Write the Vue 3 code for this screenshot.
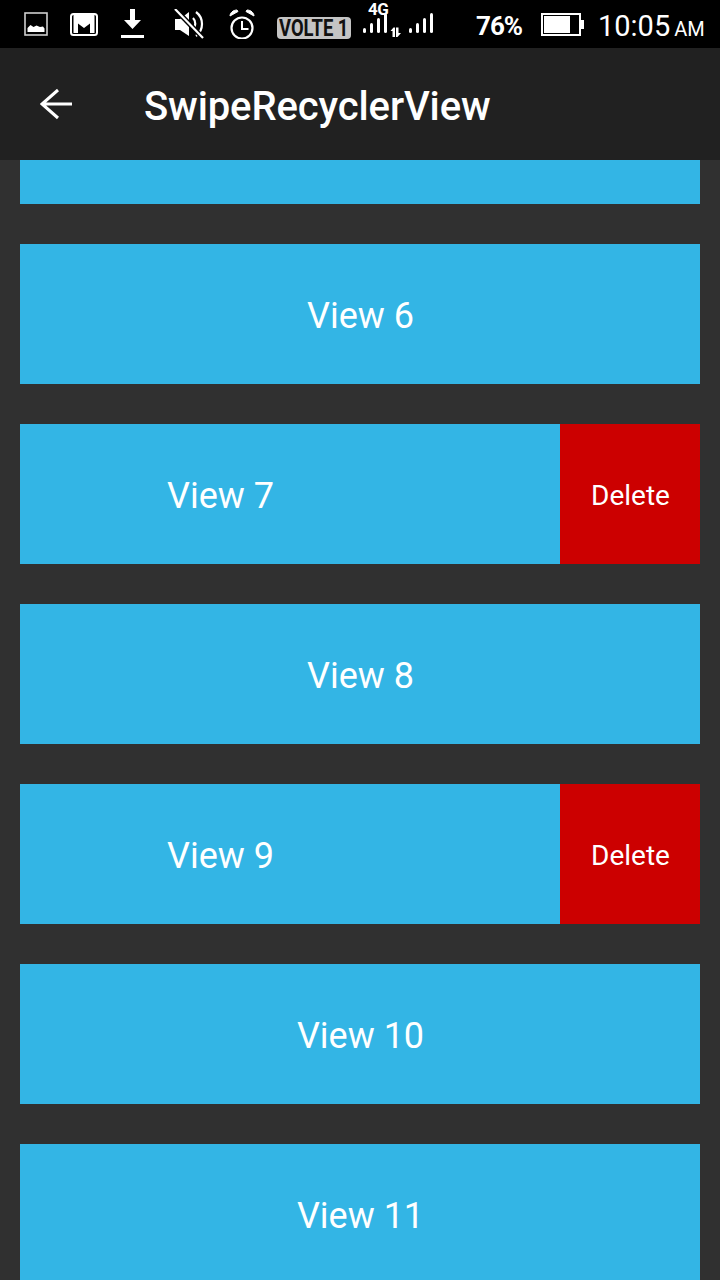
<script setup>
// the first row is scrolled almost out of view, its label sits under the toolbar
const rows = [
  { id: 5, label: "" },
  { id: 6, label: "View 6" },
  { id: 7, label: "View 7", open: true },
  { id: 8, label: "View 8" },
  { id: 9, label: "View 9", open: true },
  { id: 10, label: "View 10" },
  { id: 11, label: "View 11" },
];
</script>

<template>
  <div class="screen">
    <div class="status-bar">
      <svg class="ic-picture" width="24" height="24" viewBox="0 0 24 24">
        <rect x="1" y="1" width="22" height="22" fill="none" stroke="#cfcfcf" stroke-width="1.6" />
        <path d="M3.500 20v-4l3-3 3 2 3-1.500 3.500 1.500 3-.5 1.500 2V20z" fill="#fff" />
      </svg>
      <svg class="ic-mail" width="28" height="23" viewBox="0 0 28 23">
        <rect x="1" y="1" width="26" height="21" rx="2.500" fill="#000" stroke="#fff" stroke-width="2" />
        <path d="M3.500 2h21v18H20V10.500l-6 4.500-6-4.500V20H3.500z" fill="#fff" />
      </svg>
      <svg class="ic-download" width="23" height="30" viewBox="0 0 23 30">
        <path d="M9 0h5v11h6l-8.500 9L3 11h6z" fill="#fff" />
        <rect x="0" y="26" width="23" height="3" fill="#fff" />
      </svg>
      <svg class="ic-mute" width="32" height="30" viewBox="0 0 32 30">
        <path d="M2 10h5l9-7v24l-9-6H2z" fill="#fff" />
        <path d="M20 9c3 3 3 8 0 12M23 3c8 6 8 18 0 24" fill="none" stroke="#fff" stroke-width="2.200" />
        <path d="M2 0l28 29" stroke="#000" stroke-width="5" />
        <path d="M2 0l28 29" stroke="#fff" stroke-width="2.200" />
      </svg>
      <svg class="ic-alarm" width="26" height="30" viewBox="0 0 26 30">
        <circle cx="13" cy="19" r="10.500" fill="none" stroke="#fff" stroke-width="2.200" />
        <path d="M13 12v8h6.500" fill="none" stroke="#fff" stroke-width="2" />
        <path d="M1 7c0-3 3-6 7-6l1 1.500zM25 7c0-3-3-6-7-6l-1 1.500z" fill="#fff" stroke="#fff" stroke-width="1" />
      </svg>
      <div class="volte"><span>VOLTE 1</span></div>
      <div class="signal-wrap">
        <span class="net">4G</span>
        <svg width="72" height="26" viewBox="0 0 72 26">
          <g fill="#fff">
            <rect x="0" y="16" width="3" height="5" rx="1.500" />
            <rect x="7" y="11" width="3" height="10" rx="1.500" />
            <rect x="14" y="6" width="3" height="15" rx="1.500" />
            <rect x="21" y="1" width="3" height="20" rx="1.500" />
            <path d="M27.500 19l3-3.500h1.500V25h-2.500v-6zM33 15.500h2.500V21H38l-3.500 4H33z" />
            <rect x="46" y="16" width="3" height="5" rx="1.500" />
            <rect x="53" y="11" width="3" height="10" rx="1.500" />
            <rect x="60" y="6" width="3" height="15" rx="1.500" />
            <rect x="67" y="1" width="3" height="20" rx="1.500" />
          </g>
        </svg>
      </div>
      <span class="percent">76%</span>
      <svg class="ic-battery" width="43" height="23" viewBox="0 0 43 23">
        <rect x="1" y="1" width="38" height="21" fill="none" stroke="#fff" stroke-width="2" />
        <rect x="3" y="3" width="26" height="17" fill="#fff" />
        <rect x="40" y="7" width="3" height="9" fill="#fff" />
      </svg>
      <span class="clock">10:05<small>AM</small></span>
    </div>

    <div class="toolbar">
      <svg class="back" width="32" height="32" viewBox="0 0 32 32">
        <path d="M32 16H2M18 2L2 16l16 14" fill="none" stroke="#fff" stroke-width="3" />
      </svg>
      <span class="title">SwipeRecyclerView</span>
    </div>

    <div class="list">
      <div class="list-inner">
        <div v-for="row in rows" :key="row.id" class="row">
          <div class="row-front" :class="{ shifted: row.open }">{{ row.label }}</div>
          <div v-if="row.open" class="row-delete">Delete</div>
        </div>
      </div>
    </div>
  </div>
</template>

<style>
html,
body {
  margin: 0;
  background: #303030;
}
</style>

<style scoped>
.screen {
  width: 720px;
  height: 1280px;
  display: flex;
  flex-direction: column;
  background: #303030;
  overflow: hidden;
  font-family: Roboto, "Liberation Sans", sans-serif;
  color: #fff;
}

.status-bar {
  height: 48px;
  flex-shrink: 0;
  display: flex;
  align-items: center;
  background: #000;
  padding-left: 24px;
  box-sizing: border-box;
}

.ic-mail {
  margin-left: 22px;
}

.ic-download {
  margin-left: 23px;
}

.ic-mute {
  margin-left: 29px;
}

.ic-alarm {
  margin-left: 24px;
}

.volte {
  width: 74px;
  height: 22px;
  margin-left: 22px;
  margin-top: 8px;
  border-radius: 4px;
  background: #c4c4c4;
  color: #111;
  font-size: 23px;
  font-weight: 700;
  line-height: 23px;
  white-space: nowrap;
}

.volte span {
  display: block;
  width: 70px;
  margin-left: 2px;
  transform: scaleX(0.8);
  transform-origin: left center;
}

.signal-wrap {
  position: relative;
  width: 72px;
  height: 26px;
  margin-left: 12px;
  margin-top: 2px;
}

.net {
  position: absolute;
  left: 5px;
  top: -10px;
  font-size: 17px;
  font-weight: 700;
  line-height: 14px;
  letter-spacing: -0.5px;
}

.percent {
  width: 45px;
  margin-left: 41px;
  margin-top: 3px;
  font-size: 26px;
  font-weight: 700;
  letter-spacing: -1px;
  white-space: nowrap;
}

.ic-battery {
  margin-left: 20px;
}

.clock {
  margin-left: 14px;
  margin-top: 3px;
  font-size: 29px;
  white-space: nowrap;
}

.clock small {
  margin-left: 4px;
  font-size: 20px;
}

.toolbar {
  height: 112px;
  flex-shrink: 0;
  display: flex;
  align-items: center;
  background: #212121;
  padding-left: 40px;
  box-sizing: border-box;
}

.back {
  flex-shrink: 0;
}

.title {
  margin-left: 72px;
  margin-top: 4px;
  font-size: 40px;
  font-weight: 500;
  letter-spacing: -0.12px;
}

.list {
  flex: 1;
  overflow: hidden;
}

.list-inner {
  display: flex;
  flex-direction: column;
  gap: 40px;
  margin-top: -96px;
  padding: 0 20px;
}

.row {
  height: 140px;
  flex-shrink: 0;
  display: flex;
  background: #33b5e5;
}

.row-front {
  flex: 1;
  display: flex;
  align-items: center;
  justify-content: center;
  box-sizing: border-box;
  padding: 4px 0 0 1px;
  font-size: 36px;
}

.row-front.shifted {
  flex: none;
  width: 400px;
}

.row-delete {
  width: 140px;
  margin-left: auto;
  display: flex;
  align-items: center;
  justify-content: center;
  box-sizing: border-box;
  padding: 2px 0 0 1px;
  background: #cc0000;
  font-size: 28px;
}
</style>
